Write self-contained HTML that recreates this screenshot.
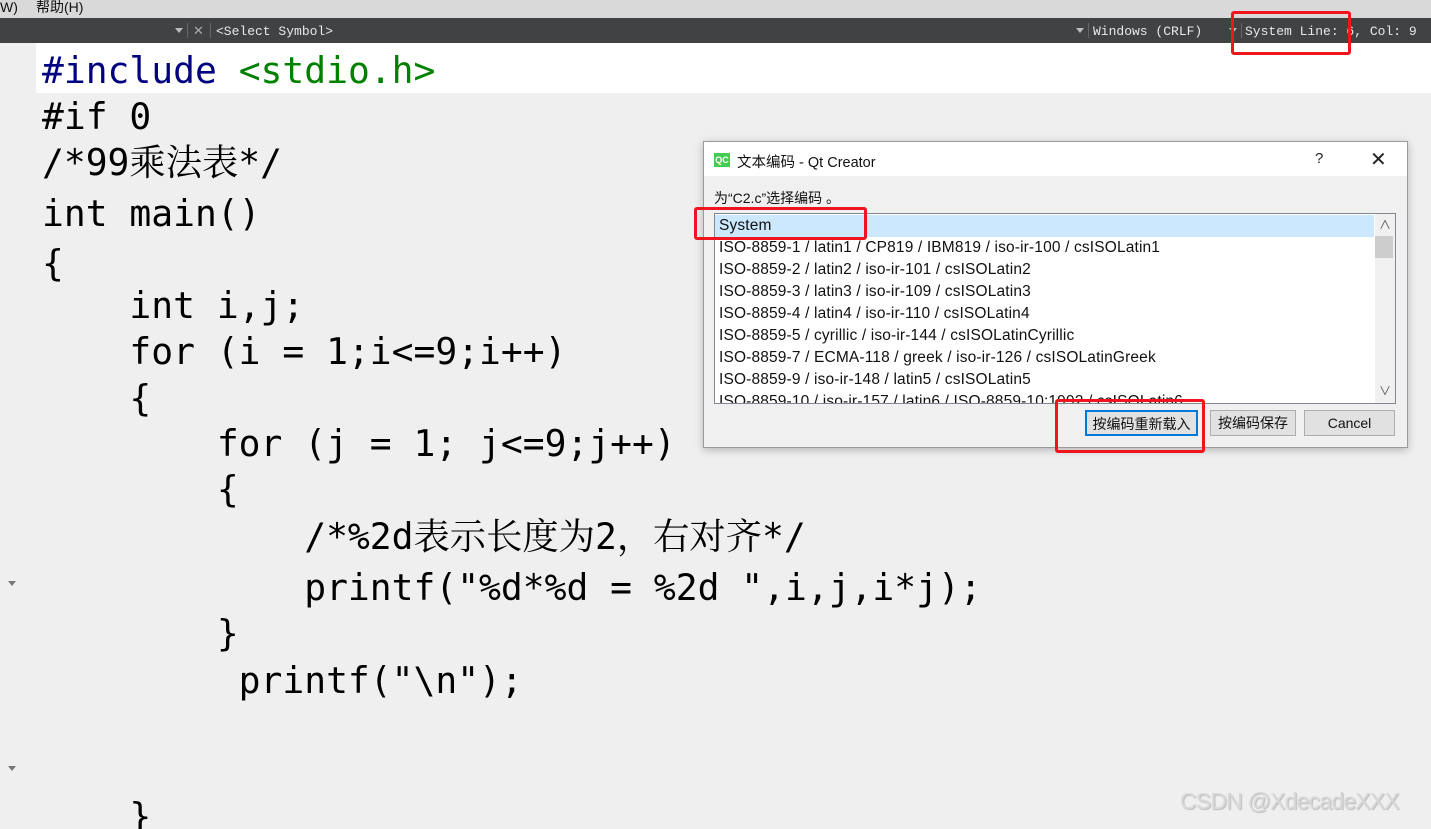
<!DOCTYPE html>
<html style="overflow:hidden;width:1431px;height:829px"><head><meta charset="utf-8"><style>
*{margin:0;padding:0;box-sizing:border-box}
body{width:1431px;height:829px;overflow:hidden;background:#efefef;position:relative;font-family:"Liberation Sans","Noto Sans CJK SC",sans-serif}
.abs{position:absolute}
.menu{left:0;top:0;width:1431px;height:18px;background:#d9d9d9;font-size:14px;line-height:14px;color:#111}
.tb{left:0;top:18px;width:1431px;height:25px;background:#404244;color:#e8e8e8;font-family:"Liberation Mono","Noto Sans CJK SC",monospace;font-size:13px;line-height:27px}
.cur{left:36px;top:43px;width:1395px;height:50px;background:#fff}
.code{font-family:"DejaVu Sans Mono","Noto Serif CJK SC",monospace;font-size:36.3px;line-height:46px;height:46px;white-space:pre;color:#000;left:42px}
.red{border:3px solid #f0141e;border-radius:3px}
.dlg{left:703px;top:141px;width:705px;height:307px;background:#f0f0f0;border:1px solid #9a9a9a;box-shadow:0 2px 8px rgba(0,0,0,.25)}
.row{position:absolute;left:4px;height:22px;line-height:22px;font-size:15.5px;color:#111;white-space:nowrap;letter-spacing:0.15px}
.btn{position:absolute;top:268px;height:26px;border:1px solid #adadad;background:#e1e1e1;font-size:14px;line-height:24px;text-align:center;color:#111}
.fold{width:0;height:0;border-left:4px solid transparent;border-right:4px solid transparent;border-top:5px solid #777}
</style></head><body>
<div class="abs menu"><span style="position:absolute;left:0;top:0">W)</span><span style="position:absolute;left:36px;top:0">帮助(H)</span></div>
<div class="abs tb">
<div class="abs fold" style="left:175px;top:10px;border-top-color:#bbb"></div>
<div class="abs" style="left:187px;top:5px;width:1px;height:15px;background:#666"></div>
<div class="abs" style="left:193px;top:0;color:#aaa">✕</div>
<div class="abs" style="left:210px;top:5px;width:1px;height:15px;background:#666"></div>
<div class="abs" style="left:216px;top:0">&lt;Select Symbol&gt;</div>
<div class="abs fold" style="left:1076px;top:10px;border-top-color:#bbb"></div>
<div class="abs" style="left:1088px;top:5px;width:1px;height:15px;background:#666"></div>
<div class="abs" style="left:1093px;top:0">Windows (CRLF)</div>
<div class="abs fold" style="left:1229px;top:10px;border-top-color:#bbb"></div>
<div class="abs" style="left:1241px;top:5px;width:1px;height:15px;background:#666"></div>
<div class="abs" style="left:1245px;top:0">System Line: 6, Col: 9</div>
</div>
<div class="abs cur"></div>
<div class="abs code" style="top:48px"><span style="color:#000080">#include</span> <span style="color:#008000">&lt;stdio.h&gt;</span></div>
<div class="abs code" style="top:94px">#if 0</div>
<div class="abs code" style="top:140px">/*99乘法表*/</div>
<div class="abs code" style="top:191px">int main()</div>
<div class="abs code" style="top:241px">{</div>
<div class="abs code" style="top:283px">    int i,j;</div>
<div class="abs code" style="top:329px">    for (i = 1;i&lt;=9;i++)</div>
<div class="abs code" style="top:376px">    {</div>
<div class="abs code" style="top:421px">        for (j = 1; j&lt;=9;j++)</div>
<div class="abs code" style="top:467px">        {</div>
<div class="abs code" style="top:514px">            /*%2d表示长度为2，右对齐*/</div>
<div class="abs code" style="top:565px">            printf("%d*%d = %2d ",i,j,i*j);</div>
<div class="abs code" style="top:611px">        }</div>
<div class="abs code" style="top:658px">         printf("\n");</div>
<div class="abs code" style="top:794px">    }</div>
<div class="abs fold" style="left:8px;top:581px"></div>
<div class="abs fold" style="left:8px;top:766px"></div>
<div class="abs red" style="left:1231px;top:11px;width:120px;height:44px"></div>

<div class="abs dlg">
<div class="abs" style="left:0;top:0;width:703px;height:34px;background:#fff"></div>
<div class="abs" style="left:10px;top:11px;width:16px;height:14px;background:#41cd52;color:#fff;font-size:9px;line-height:14px;text-align:center;font-weight:bold">QC</div>
<div class="abs" style="left:33px;top:9px;font-size:14.5px;color:#111">文本编码 - Qt Creator</div>
<div class="abs" style="left:611px;top:8px;font-size:15px;color:#222">?</div>
<div class="abs" style="left:666px;top:5px;font-size:20px;color:#222">✕</div>
<div class="abs" style="left:10px;top:46px;font-size:14px;color:#111">为“C2.c”选择编码 。</div>
<div class="abs" style="left:10px;top:71px;width:682px;height:191px;background:#fff;border:1px solid #828790;overflow:hidden">
<div class="abs" style="left:0;top:1px;width:659px;height:22px;background:#cce8ff"></div>
<div class="row" style="top:1px">System</div>
<div class="row" style="top:23px">ISO-8859-1 / latin1 / CP819 / IBM819 / iso-ir-100 / csISOLatin1</div>
<div class="row" style="top:45px">ISO-8859-2 / latin2 / iso-ir-101 / csISOLatin2</div>
<div class="row" style="top:67px">ISO-8859-3 / latin3 / iso-ir-109 / csISOLatin3</div>
<div class="row" style="top:89px">ISO-8859-4 / latin4 / iso-ir-110 / csISOLatin4</div>
<div class="row" style="top:111px">ISO-8859-5 / cyrillic / iso-ir-144 / csISOLatinCyrillic</div>
<div class="row" style="top:133px">ISO-8859-7 / ECMA-118 / greek / iso-ir-126 / csISOLatinGreek</div>
<div class="row" style="top:155px">ISO-8859-9 / iso-ir-148 / latin5 / csISOLatin5</div>
<div class="row" style="top:177px">ISO-8859-10 / iso-ir-157 / latin6 / ISO-8859-10:1992 / csISOLatin6</div>
<div class="abs" style="left:660px;top:0;width:20px;height:189px;background:#f0f0f0"></div>
<div class="abs" style="left:660px;top:22px;width:18px;height:22px;background:#cdcdcd"></div>
<div class="abs" style="left:664px;top:2px;font-size:12px;color:#555">∧</div>
<div class="abs" style="left:664px;top:168px;font-size:12px;color:#555">∨</div>
</div>
<div class="btn" style="left:381px;width:113px;border:2px solid #0078d7">按编码重新载入</div>
<div class="btn" style="left:506px;width:86px">按编码保存</div>
<div class="btn" style="left:600px;width:91px">Cancel</div>
</div>
<div class="abs red" style="left:694px;top:207px;width:173px;height:33px"></div>
<div class="abs red" style="left:1055px;top:399px;width:150px;height:54px"></div>
<div class="abs" style="left:1180px;top:788px;font-size:23px;color:#d8d8d8;text-shadow:1px 1px 1px #bbb;letter-spacing:-0.8px">CSDN @XdecadeXXX</div>
</body></html>
